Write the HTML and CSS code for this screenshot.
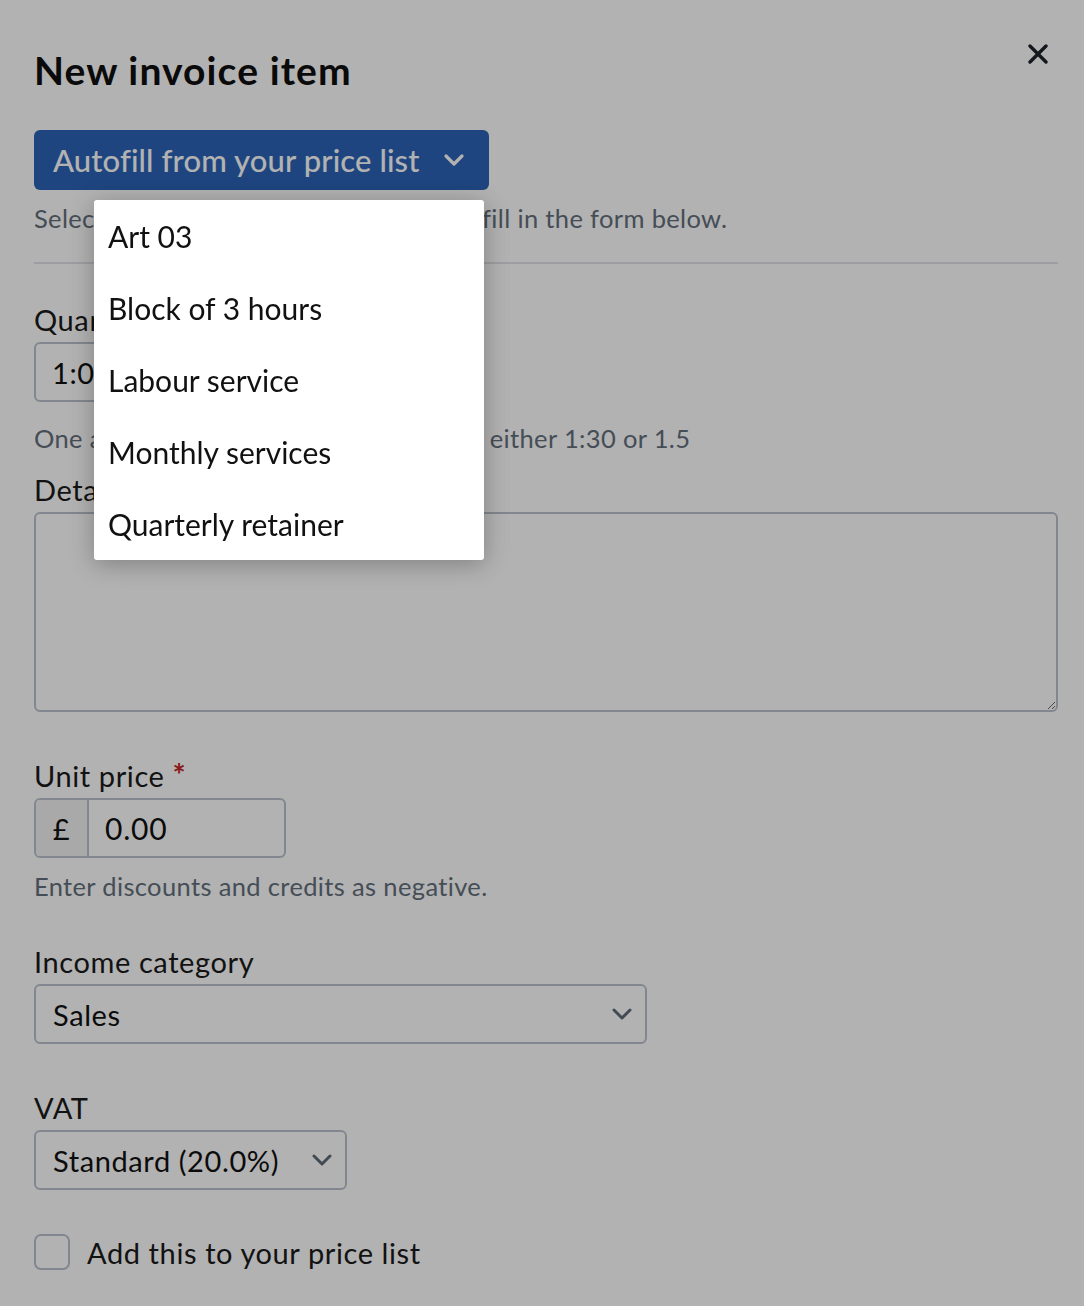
FILE: index.html
```html
<!DOCTYPE html>
<html lang="en">

<head>
    <meta charset="UTF-8">
    <meta name="viewport" content="width=device-width, initial-scale=1.0">
    <title>New invoice item</title>
    <link rel="stylesheet" href="styles.css">
</head>

<body>
    <div class="modal">
        <header class="modal-head">
            <h1>New invoice item</h1>
            <button class="close" aria-label="Close">
                <svg width="22" height="20" viewBox="0 0 22 20">
                    <path d="M3 2 L19 18 M19 2 L3 18" stroke="#1d2329" stroke-width="3.4" stroke-linecap="round" fill="none"/>
                </svg>
            </button>
        </header>

        <div class="autofill">
            <button class="autofill-btn">
                Autofill from your price list
                <svg width="22" height="14" viewBox="0 0 22 14">
                    <path d="M3 3 L11 11 L19 3" stroke="#ffffff" stroke-width="3.2" stroke-linecap="round" stroke-linejoin="round" fill="none"/>
                </svg>
            </button>
            <ul class="menu">
                <li>Art 03</li>
                <li>Block of 3 hours</li>
                <li>Labour service</li>
                <li>Monthly services</li>
                <li>Quarterly retainer</li>
            </ul>
            <p class="hint">Select from your price lists to instantly fill in the form below.</p>
        </div>

        <hr>

        <div class="field">
            <label for="qty">Quantity</label>
            <input class="input qty" type="text" id="qty" value="1:00">
            <p class="hint">One and a half hours can be entered as either 1:30 or 1.5</p>
        </div>

        <div class="field field-tight">
            <label for="details">Details</label>
            <textarea id="details"></textarea>
        </div>

        <div class="field">
            <label for="price">Unit price <span class="req">*</span></label>
            <div class="money">
                <span class="prefix">£</span>
                <input type="text" id="price" value="0.00">
            </div>
            <p class="hint hint-near">Enter discounts and credits as negative.</p>
        </div>

        <div class="field after-hint">
            <label for="cat">Income category</label>
            <div class="select wide">
                <span>Sales</span>
                <svg width="20" height="12" viewBox="0 0 20 12">
                    <path d="M2 2 L10 10 L18 2" stroke="#5f6b78" stroke-width="3" stroke-linecap="round" stroke-linejoin="round" fill="none"/>
                </svg>
            </div>
        </div>

        <div class="field">
            <label for="vat">VAT</label>
            <div class="select narrow">
                <span>Standard (20.0%)</span>
                <svg width="20" height="12" viewBox="0 0 20 12">
                    <path d="M2 2 L10 10 L18 2" stroke="#5f6b78" stroke-width="3" stroke-linecap="round" stroke-linejoin="round" fill="none"/>
                </svg>
            </div>
        </div>

        <div class="field check">
            <span class="box"></span>
            <span>Add this to your price list</span>
        </div>
    </div>
    <div class="scrim"></div>
</body>

</html>
```

FILE: styles.css
```css
* {
    padding: 0;
    margin: 0;
    box-sizing: border-box;
}

body {
    font-family: Lato, "Noto Sans", sans-serif;
    color: #1a1a1a;
    background-color: #ffffff;
    overflow: hidden;
}

.modal {
    padding: 48px 26px 0 34px;
}

.modal-head {
    display: flex;
    justify-content: space-between;
    align-items: flex-start;
}

.modal-head h1 {
    font-size: 39px;
    font-weight: bold;
    line-height: 44px;
    letter-spacing: 1.1px;
    color: #0f0f0f;
}

.close {
    background: none;
    border: none;
    width: 22px;
    height: 20px;
    margin: -4px 9px 0 0;
    cursor: pointer;
}

.autofill {
    position: relative;
    margin-top: 38px;
}

.autofill-btn {
    display: flex;
    align-items: center;
    gap: 24px;
    height: 60px;
    padding: 0 24px 0 19px;
    background-color: #2c63b7;
    color: #ffffff;
    font-family: inherit;
    font-size: 31px;
    font-weight: 500;
    letter-spacing: 0.1px;
    border: none;
    border-radius: 6px;
}

.menu {
    position: absolute;
    left: 60px;
    top: 70px;
    width: 390px;
    background-color: #ffffff;
    list-style: none;
    border-radius: 3px;
    box-shadow: 0 4px 24px rgba(0, 0, 0, 0.28);
    z-index: 2;
}

.menu li {
    height: 72px;
    line-height: 72px;
    padding-left: 14px;
    font-size: 30px;
    color: #111111;
}

.hint {
    font-size: 25.5px;
    line-height: 32px;
    letter-spacing: 0.35px;
    color: #636f7c;
}

.autofill .hint {
    margin-top: 12px;
}

hr {
    border: none;
    height: 2px;
    background-color: #e2e2e9;
    margin-top: 28px;
}

.field {
    display: flex;
    flex-direction: column;
    align-items: flex-start;
    margin-top: 46px;
}

hr + .field {
    margin-top: 38px;
}

.field-tight {
    margin-top: 18px;
}

.after-hint {
    margin-top: 42px;
}

label {
    font-size: 29px;
    line-height: 36px;
    letter-spacing: 0.6px;
    margin-bottom: 4px;
}

.req {
    color: #c42525;
    font-weight: bold;
    font-size: 31px;
    line-height: 1;
    vertical-align: 1px;
}

.input,
.money,
.select,
textarea {
    border: 2px solid #bbc2cd;
    border-radius: 6px;
    font-family: inherit;
    font-size: 29px;
    letter-spacing: 0.6px;
    color: #111111;
}

.input {
    height: 60px;
    width: 300px;
    padding: 0 16px;
}

.field .hint {
    margin-top: 20px;
}

.field .hint-near {
    margin-top: 12px;
}

textarea {
    width: 100%;
    height: 200px;
    resize: vertical;
}

.money {
    display: flex;
    height: 60px;
    width: 252px;
    overflow: hidden;
}

.prefix {
    width: 53px;
    display: flex;
    align-items: center;
    justify-content: center;
    background-color: #f3f3f3;
    border-right: 2px solid #bbc2cd;
}

.money input {
    border: none;
    outline: none;
    font-family: inherit;
    font-size: 30px;
    letter-spacing: 0.8px;
    color: #111111;
    padding-left: 16px;
    width: 160px;
}

.select {
    display: flex;
    align-items: center;
    justify-content: space-between;
    height: 60px;
    padding: 0 13px 0 17px;
}

.select.wide {
    width: 613px;
}

.select.narrow {
    width: 313px;
}

.check {
    flex-direction: row;
    align-items: center;
    gap: 17px;
    margin-top: 44px;
    font-size: 29px;
    letter-spacing: 0.6px;
}

.box {
    width: 36px;
    height: 36px;
    border: 2px solid #bbc2cd;
    border-radius: 7px;
}

.scrim {
    position: fixed;
    inset: 0;
    background-color: rgba(0, 0, 0, 0.3);
    z-index: 1;
}
```
